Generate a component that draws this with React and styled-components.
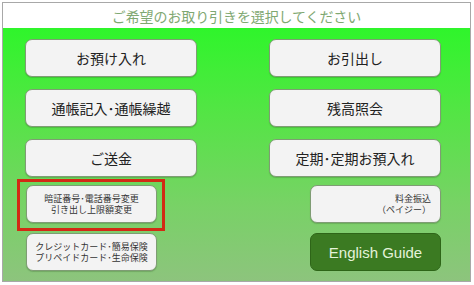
import React from "react";
import styled, { createGlobalStyle } from "styled-components";

const Global = createGlobalStyle`
	html, body {
		margin: 0;
		background: #ffffff;
	}
	body {
		font-family: "Noto Sans CJK JP", "Noto Sans", sans-serif;
	}
`;

const Page = styled.div`
	padding: 2px;
`;

const Frame = styled.div`
	width: 467px;
	border: 1px solid #a8a8a8;
	display: flex;
	flex-direction: column;
`;

const Header = styled.div`
	height: 25px;
	display: flex;
	align-items: center;
	justify-content: center;
	background: #ffffff;
	color: #7fa872;
	font-size: 14px;
	letter-spacing: -0.1px;
`;

const Panel = styled.div`
	display: grid;
	grid-template-columns: 172px 172px;
	column-gap: 72px;
	padding: 11px 0 10px 22px;
	background: linear-gradient(#2ff52b 0%, #55e446 35%, #78d266 70%, #8dc47d 100%);
`;

const Column = styled.div`
	display: flex;
	flex-direction: column;
	align-items: ${p => (p.$right ? "flex-end" : "flex-start")};
`;

const BigStack = styled.div`
	display: flex;
	flex-direction: column;
	gap: 12px;
	width: 100%;
`;

const SmallStack = styled.div`
	display: flex;
	flex-direction: column;
	align-items: flex-start;
	gap: 10px;
	margin-top: 8px;
	padding-left: ${p => (p.$right ? "0" : "1px")};
`;

const Highlight = styled.div`
	border: 3px solid #d22a14;
	padding: 3px 5px 5px 6px;
	margin: -6px 0 -8px -9px;
`;

const Button = styled.button`
	box-sizing: border-box;
	height: 38px;
	width: ${p => p.$width}px;
	border: 1px solid #7f9c74;
	border-radius: 7px;
	background: #f3f3f3;
	box-shadow: 0 1px 1px rgba(40, 80, 30, 0.25);
	color: #222222;
	font-family: "Noto Sans CJK JP", sans-serif;
	font-size: 14px;
	padding: 0;
	display: flex;
	flex-direction: column;
	align-items: center;
	justify-content: center;
`;

const SmallText = styled.span`
	display: block;
	font-size: 9px;
	line-height: 11px;
	height: 11px;
	overflow: hidden;
	color: #333333;
	white-space: nowrap;
	text-align: ${p => p.$align || "center"};
	align-self: ${p => (p.$align === "right" ? "flex-end" : "center")};
	padding-right: ${p => (p.$align === "right" ? "9px" : "0")};
`;

const GuideButton = styled.button`
	box-sizing: border-box;
	height: 38px;
	width: 131px;
	border: 1px solid #2e6518;
	border-radius: 7px;
	background: #3b7a22;
	color: #e4f3da;
	font-family: "Liberation Sans", Arial, sans-serif;
	font-size: 15px;
	padding: 0;
`;

export default function App() {
	return (
		<Page>
			<Global />
			<Frame>
				<Header>ご希望のお取り引きを選択してください</Header>
				<Panel>
					<Column>
						<BigStack>
							<Button $width={172}>お預け入れ</Button>
							<Button $width={172}>通帳記入･通帳繰越</Button>
							<Button $width={172}>ご送金</Button>
						</BigStack>
						<SmallStack>
							<Highlight>
								<Button $width={131}>
									<SmallText>暗証番号･電話番号変更</SmallText>
									<SmallText>引き出し上限額変更</SmallText>
								</Button>
							</Highlight>
							<Button $width={131}>
								<SmallText>クレジットカード･簡易保険</SmallText>
								<SmallText>プリペイドカード･生命保険</SmallText>
							</Button>
						</SmallStack>
					</Column>
					<Column $right>
						<BigStack>
							<Button $width={172}>お引出し</Button>
							<Button $width={172}>残高照会</Button>
							<Button $width={172}>定期･定期お預入れ</Button>
						</BigStack>
						<SmallStack $right>
							<Button $width={131}>
								<SmallText $align="right">料金振込</SmallText>
								<SmallText $align="right">（ペイジー）</SmallText>
							</Button>
							<GuideButton>English Guide</GuideButton>
						</SmallStack>
					</Column>
				</Panel>
			</Frame>
		</Page>
	);
}
